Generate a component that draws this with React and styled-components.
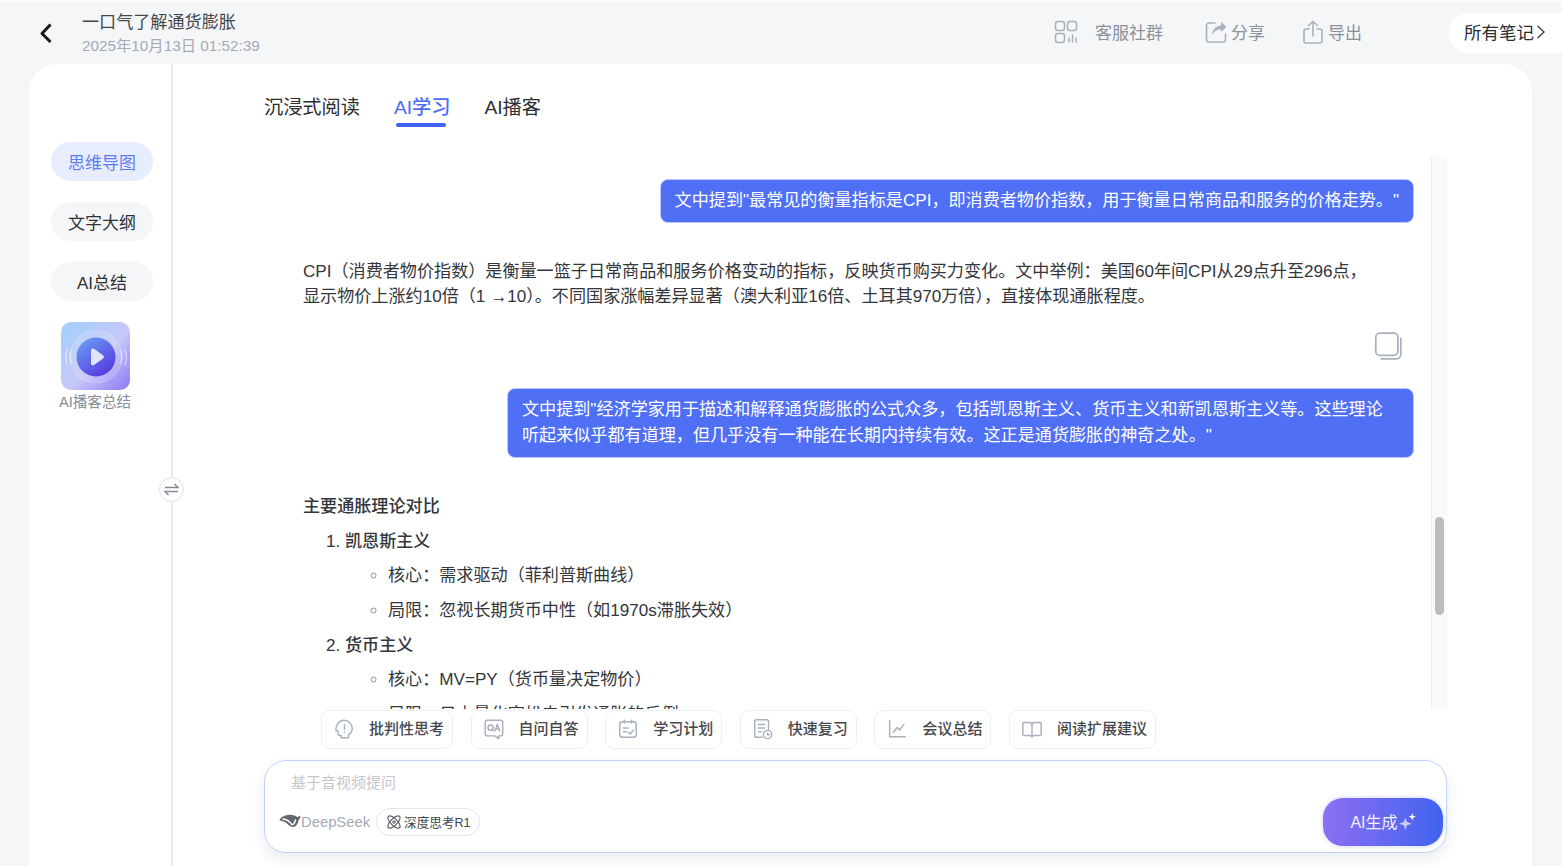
import React from 'react';
import styled, { createGlobalStyle } from 'styled-components';

const GlobalStyle = createGlobalStyle`
  html, body {
    margin: 0;
    padding: 0;
    height: 100%;
    background: #f5f6f8;
    font-family: "Liberation Sans", "Noto Sans CJK SC", sans-serif;
    overflow: hidden;
  }
  * { box-sizing: border-box; }
`;

const Page = styled.div`
  width: 1562px;
  height: 866px;
  display: flex;
  flex-direction: column;
  border-top: 2px solid #fcfcfd;
  overflow: hidden;
`;

const Header = styled.header`
  height: 62px;
  flex: none;
  display: flex;
  align-items: center;
  padding-left: 38px;
`;

const BackButton = styled.div`
  width: 18px;
  height: 24px;
  margin-right: 26px;
  display: flex;
  align-items: center;
`;

const TitleBlock = styled.div`
  display: flex;
  flex-direction: column;
  margin-top: 2px;
`;

const Title = styled.div`
  font-size: 17.1px;
  line-height: 23px;
  color: #42464e;
`;

const DateText = styled.div`
  font-size: 15.3px;
  line-height: 23px;
  color: #a4aab5;
`;

const HeaderActions = styled.div`
  margin-left: auto;
  display: flex;
  align-items: center;
  color: #8c929d;
  font-size: 17px;
`;

const HeaderAction = styled.div`
  display: flex;
  align-items: center;
  gap: ${(p) => p.$gap || 5}px;
  margin-right: ${(p) => p.$after}px;
  padding-bottom: 3px;
`;

const NotesPill = styled.div`
  width: 113px;
  height: 40px;
  padding: 0 0 3px 15px;
  display: flex;
  align-items: center;
  gap: 2px;
  background: #fff;
  border-radius: 20px 0 0 20px;
  color: #2b2d31;
  font-size: 17.5px;
`;

const Card = styled.div`
  flex: 1;
  min-height: 0;
  margin: 0 30px 0 29px;
  background: #fff;
  border-radius: 28px 28px 0 0;
  display: flex;
`;

const Sidebar = styled.aside`
  position: relative;
  width: 144px;
  flex: none;
  border-right: 2px solid #e6e8ef;
  padding: 78px 0 0 22px;
  display: flex;
  flex-direction: column;
  gap: 21px;
`;

const SidePill = styled.div`
  width: 102px;
  height: 39px;
  border-radius: 20px;
  display: flex;
  align-items: center;
  justify-content: center;
  padding-bottom: 1px;
  font-size: 17px;
  background: ${(p) => (p.$active ? '#e8edfd' : '#f5f6f8')};
  color: ${(p) => (p.$active ? '#5f7df1' : '#2f3136')};
`;

const PodcastTile = styled.div`
  width: 90px;
  margin-left: -1px;
  display: flex;
  flex-direction: column;
  align-items: center;
  gap: 1px;
  color: #888d96;
  font-size: 14.6px;
  line-height: 22px;
  white-space: nowrap;
`;

const SwapToggle = styled.div`
  position: absolute;
  right: -13px;
  top: 413px;
  width: 25px;
  height: 25px;
  border-radius: 50%;
  background: #fff;
  border: 1.5px solid #e0e3ea;
  display: flex;
  align-items: center;
  justify-content: center;
`;

const Main = styled.main`
  flex: 1;
  min-width: 0;
  padding: 0 85px 0 91px;
  display: flex;
  flex-direction: column;
`;

const Tabs = styled.nav`
  height: 92px;
  flex: none;
  padding-top: 31px;
  display: flex;
  gap: 34px;
`;

const Tab = styled.div`
  position: relative;
  height: 26px;
  line-height: 26px;
  font-size: 19.2px;
  font-weight: ${(p) => (p.$active ? 500 : 400)};
  color: ${(p) => (p.$active ? '#4a6cf7' : '#2b2d31')};

  ${(p) =>
    p.$active &&
    `&::after {
      content: '';
      position: absolute;
      left: 2px;
      right: 4px;
      bottom: -6px;
      height: 4px;
      border-radius: 2px;
      background: #3f63ee;
    }`}
`;

const ChatArea = styled.div`
  height: 553px;
  flex: none;
  display: flex;
`;

const Messages = styled.div`
  flex: 1;
  min-width: 0;
  overflow: hidden;
  padding: 23px 17px 0 39px;
  display: flex;
  flex-direction: column;
  font-size: 17.1px;
  color: #33363b;
`;

const Bubble = styled.div`
  align-self: flex-end;
  width: ${(p) => (p.$width ? `${p.$width}px` : 'auto')};
  padding: 8px 14px;
  background: #4f6ff5;
  border: 1px solid #b9c7fb;
  border-radius: 8px;
  color: #fff;
  font-size: 17.1px;
  line-height: 26px;
  white-space: nowrap;
  flex: none;
`;

const Answer = styled.div`
  margin-top: 36px;
  line-height: 25px;
  white-space: nowrap;
  flex: none;
`;

const CopyRow = styled.div`
  display: flex;
  justify-content: flex-end;
  padding-right: 12px;
  margin: 23px 0 29px;
  height: 27px;
  flex: none;
`;

const Heading = styled.div`
  margin-top: 36px;
  line-height: 25px;
  font-weight: 500;
  flex: none;
`;

const Ordered = styled.ol`
  margin: 0;
  padding: 0 0 0 42px;
  flex: none;
`;

const OrderedItem = styled.li`
  margin-top: 9.7px;
  line-height: 25px;
  font-weight: 500;
`;

const Circles = styled.ul`
  margin: 0;
  padding: 0 0 0 43px;
  list-style: circle;
  font-weight: 400;
`;

const CircleItem = styled.li`
  margin-top: 9.7px;
  line-height: 25px;
  white-space: nowrap;

  &::marker {
    color: #8b9099;
  }
`;

const ScrollTrack = styled.div`
  width: 16px;
  flex: none;
  background: #fafafa;
  border-left: 1px solid #f0f0f0;
  padding: 361px 3px 0 3px;
`;

const ScrollThumb = styled.div`
  width: 9px;
  height: 98px;
  border-radius: 5px;
  background: #bdbdbd;
`;

const Chips = styled.div`
  flex: none;
  height: 39px;
  margin-top: 1px;
  padding-left: 57px;
  display: flex;
  gap: 17.6px;
`;

const Chip = styled.div`
  height: 39px;
  padding: 0 8px 2px 11px;
  display: flex;
  align-items: center;
  gap: 14px;
  background: #fff;
  border: 1px solid #eff0f3;
  border-radius: 9px;
  font-size: 15px;
  font-weight: 500;
  color: #44474d;
  white-space: nowrap;
  line-height: 18px;
`;

const Composer = styled.div`
  flex: none;
  height: 93px;
  margin-top: 11px;
  border: 1.5px solid #c3d2f8;
  border-radius: 22px;
  background: #fff;
  box-shadow: 0 6px 14px rgba(60, 70, 110, 0.1);
  display: flex;
  flex-direction: column;
  padding: 10px 3px 0 14px;
`;

const Placeholder = styled.div`
  padding-left: 12px;
  font-size: 15px;
  line-height: 24px;
  color: #c6c7ca;
`;

const ComposerRow = styled.div`
  display: flex;
  align-items: center;
  margin-top: 3px;
`;

const ModelName = styled.div`
  display: flex;
  align-items: center;
  gap: 0;
  font-size: 14.8px;
  color: #a4aab5;
  margin-right: 6px;
`;

const ThinkChip = styled.div`
  height: 28px;
  padding: 0 8px 1px 9px;
  display: flex;
  align-items: center;
  gap: 2px;
  border: 1.5px solid #e4e6ec;
  border-radius: 14px;
  font-size: 12.6px;
  color: #44474d;
  white-space: nowrap;
`;

const GenerateButton = styled.div`
  margin-left: auto;
  width: 120px;
  height: 48px;
  padding-bottom: 2px;
  border-radius: 20px;
  background: linear-gradient(90deg, #8d6ff2, #4063ee);
  box-shadow: 0 0 4px rgba(90, 100, 230, 0.35);
  color: #f1f0ff;
  font-size: 16px;
  display: flex;
  align-items: center;
  justify-content: center;
  gap: 1px;
`;

const Gray = ({ size = 24, children, w = 1.6, box = 24 }) => (
  <svg
    width={size}
    height={size}
    viewBox={`0 0 ${box} ${box}`}
    fill="none"
    stroke="#a9b1be"
    strokeWidth={w}
    strokeLinecap="round"
    strokeLinejoin="round"
  >
    {children}
  </svg>
);

const chips = [
  {
    label: '批判性思考',
    icon: (
      <Gray size={22}>
        <path d="M12 2.500a9 9 0 0 1 9 9c0 3-1.500 5-4 6.500v3.500H9V19H7.500a2 2 0 0 1-2-2v-2.500L3 13.500c.2-6 3.800-11 9-11z" />
        <path d="M12.500 7v5.500M12.500 15.500v.4" />
      </Gray>
    ),
  },
  {
    label: '自问自答',
    icon: (
      <Gray size={22}>
        <path d="M4.500 2.500h15a2 2 0 0 1 2 2v13a2 2 0 0 1-2 2H17v3l-4-3H4.500a2 2 0 0 1-2-2v-13a2 2 0 0 1 2-2z" />
        <circle cx="8.300" cy="10.500" r="2.800" />
        <path d="M10 13l1 1M13 14l2.600-7 2.600 7M14 12h3.400" />
      </Gray>
    ),
  },
  {
    label: '学习计划',
    icon: (
      <Gray size={22}>
        <rect x="3" y="4" width="18" height="17" rx="3" />
        <path d="M8 2.500v3M16 2.500v3M7 11h5M7 15h3M12 15.500l2.500 2 3.500-4.500" />
      </Gray>
    ),
  },
  {
    label: '快速复习',
    icon: (
      <Gray size={22}>
        <path d="M11 21H5a2 2 0 0 1-2-2V4a2 2 0 0 1 2-2h11a2 2 0 0 1 2 2v8" />
        <path d="M7 7h7M7 11h7M7 15h3" />
        <circle cx="17" cy="18" r="4.500" />
        <path d="M17 16v2.200h2" />
      </Gray>
    ),
  },
  {
    label: '会议总结',
    icon: (
      <Gray size={22}>
        <path d="M4 3v17.500h17" />
        <path d="M8 15.500l4-5 3 2.500 4.500-6" />
      </Gray>
    ),
  },
  {
    label: '阅读扩展建议',
    icon: (
      <Gray size={22}>
        <path d="M6 5H3a1 1 0 0 0-1 1v12a1 1 0 0 0 1 1h7l2 1.500 2-1.500h7a1 1 0 0 0 1-1V6a1 1 0 0 0-1-1h-3" />
        <path d="M6 5h3a3 3 0 0 1 3 3v11M18 5h-3a3 3 0 0 0-3 3" />
      </Gray>
    ),
  },
];

function PodcastIcon() {
  return (
    <svg width="69" height="68" viewBox="0 0 69 68">
      <defs>
        <linearGradient id="tile" x1="0" y1="0" x2="1" y2="1">
          <stop offset="0" stopColor="#9fd0fb" />
          <stop offset="0.55" stopColor="#c8c8f8" />
          <stop offset="1" stopColor="#8b78f6" />
        </linearGradient>
        <linearGradient id="disc" x1="0.1" y1="0" x2="0.8" y2="1">
          <stop offset="0" stopColor="#6aa0f6" />
          <stop offset="1" stopColor="#5536de" />
        </linearGradient>
      </defs>
      <rect width="69" height="68" rx="10" fill="url(#tile)" />
      <circle cx="35" cy="35" r="26" fill="#fff" fillOpacity="0.12" stroke="#fff" strokeOpacity="0.25" />
      <circle cx="35" cy="35" r="19.500" fill="url(#disc)" />
      <path
        d="M30 28.500c0-1.600 1.700-2.500 3-1.700l9 6.500c1.100.8 1.100 2.500 0 3.300l-9 6.500c-1.300.8-3-.1-3-1.700z"
        fill="#e4e4fc"
      />
      <path d="M6 27c-1.500 5-1.500 11 0 16M10 29c-1 3.500-1 8.500 0 12M64 27c1.500 5 1.500 11 0 16M60 29c1 3.500 1 8.500 0 12" fill="none" stroke="#fff" strokeOpacity="0.55" strokeWidth="1.200" strokeLinecap="round" />
    </svg>
  );
}

function WhaleIcon() {
  return (
    <svg width="22" height="16" viewBox="0 0 22 16">
      <path
        d="M21.500 1.500c-1 .6-2 .8-3 1.800C16.500 1.500 13 .5 9 1 4 1.700 1 4 .5 6.500c2.500 0 5.500 1.200 8 3.500 1.800 1.800 3.500 3 5.500 3 3 0 5-3 5.300-6.200.9-.9 2-3 2.200-5.300z"
        fill="#63666e"
      />
      <path d="M4 5c3 .3 6.500 2 9 5.800 1.700-.5 3-2.500 3.500-4.800" fill="none" stroke="#fff" strokeWidth="1.400" strokeLinecap="round" />
    </svg>
  );
}

export default function App() {
  return (
    <>
      <GlobalStyle />
      <Page>
        <Header>
          <BackButton>
            <svg width="16" height="24" viewBox="0 0 16 24" fill="none">
              <path d="M12.500 3.500L4 12.500l8.500 8.500" stroke="#15171a" strokeWidth="3" strokeLinejoin="round" />
            </svg>
          </BackButton>
          <TitleBlock>
            <Title>一口气了解通货膨胀</Title>
            <DateText>2025年10月13日 01:52:39</DateText>
          </TitleBlock>
          <HeaderActions>
            <HeaderAction $after={41} $gap={17}>
              <Gray size={24} w={1.5}>
                <rect x="1.500" y="1.500" width="9" height="9" rx="2.500" />
                <rect x="13.500" y="1.500" width="9" height="9" rx="2.500" />
                <rect x="1.500" y="13.500" width="9" height="9" rx="2.500" />
                <path d="M15 18v4M18.500 15v7M22 18v4" />
              </Gray>
              客服社群
            </HeaderAction>
            <HeaderAction $after={36} $gap={3}>
              <Gray size={24}>
                <path d="M11 3H5a2.500 2.500 0 0 0-2.500 2.500v14A2.500 2.500 0 0 0 5 22h14a2.500 2.500 0 0 0 2.500-2.500V14" />
                <path d="M17 2l5.500 5-5.500 5V9.500c-4 0-7 1.500-9 5.500 .5-5.500 3.500-9 9-9.500z" fill="#a9b1be" stroke="none" />
              </Gray>
              分享
            </HeaderAction>
            <HeaderAction $after={87} $gap={3}>
              <Gray size={24}>
                <path d="M8 9H5a2 2 0 0 0-2 2v10a2 2 0 0 0 2 2h14a2 2 0 0 0 2-2V11a2 2 0 0 0-2-2h-3" />
                <path d="M12 16V1.500M7.500 5.500L12 1.500l4.500 4" />
              </Gray>
              导出
            </HeaderAction>
            <NotesPill>
              所有笔记
              <svg width="10" height="16" viewBox="0 0 10 16" fill="none">
                <path d="M1.500 2l6.500 6-6.500 6" stroke="#3a3d42" strokeWidth="1.300" />
              </svg>
            </NotesPill>
          </HeaderActions>
        </Header>
        <Card>
          <Sidebar>
            <SidePill $active>思维导图</SidePill>
            <SidePill>文字大纲</SidePill>
            <SidePill>AI总结</SidePill>
            <PodcastTile>
              <PodcastIcon />
              AI播客总结
            </PodcastTile>
            <SwapToggle>
              <svg width="15" height="13" viewBox="0 0 15 13" fill="none" stroke="#858b96" strokeWidth="1.500">
                <path d="M1 4.500h13L10.500 1M14 8.500H1l3.500 3.500" />
              </svg>
            </SwapToggle>
          </Sidebar>
          <Main>
            <Tabs>
              <Tab>沉浸式阅读</Tab>
              <Tab $active>AI学习</Tab>
              <Tab>AI播客</Tab>
            </Tabs>
            <ChatArea>
              <Messages>
                <Bubble>文中提到"最常见的衡量指标是CPI，即消费者物价指数，用于衡量日常商品和服务的价格走势。"</Bubble>
                <Answer>
                  CPI（消费者物价指数）是衡量一篮子日常商品和服务价格变动的指标，反映货币购买力变化。文中举例：美国60年间CPI从29点升至296点，
                  <br />
                  显示物价上涨约10倍（1 →10）。不同国家涨幅差异显著（澳大利亚16倍、土耳其970万倍），直接体现通胀程度。
                </Answer>
                <CopyRow>
                  <Gray size={28} w={1.5}>
                    <rect x="1.500" y="1" width="19" height="19" rx="3.500" />
                    <path d="M23 5.500V19a4 4 0 0 1-4 4H6" />
                  </Gray>
                </CopyRow>
                <Bubble $width={907}>
                  文中提到"经济学家用于描述和解释通货膨胀的公式众多，包括凯恩斯主义、货币主义和新凯恩斯主义等。这些理论
                  <br />
                  听起来似乎都有道理，但几乎没有一种能在长期内持续有效。这正是通货膨胀的神奇之处。"
                </Bubble>
                <Heading>主要通胀理论对比</Heading>
                <Ordered>
                  <OrderedItem>
                    凯恩斯主义
                    <Circles>
                      <CircleItem>核心：需求驱动（菲利普斯曲线）</CircleItem>
                      <CircleItem>局限：忽视长期货币中性（如1970s滞胀失效）</CircleItem>
                    </Circles>
                  </OrderedItem>
                  <OrderedItem>
                    货币主义
                    <Circles>
                      <CircleItem>核心：MV=PY（货币量决定物价）</CircleItem>
                      <CircleItem>局限：日本量化宽松未引发通胀的反例</CircleItem>
                    </Circles>
                  </OrderedItem>
                </Ordered>
              </Messages>
              <ScrollTrack>
                <ScrollThumb />
              </ScrollTrack>
            </ChatArea>
            <Chips>
              {chips.map((c) => (
                <Chip key={c.label}>
                  {c.icon}
                  {c.label}
                </Chip>
              ))}
            </Chips>
            <Composer>
              <Placeholder>基于音视频提问</Placeholder>
              <ComposerRow>
                <ModelName>
                  <WhaleIcon />
                  DeepSeek
                </ModelName>
                <ThinkChip>
                  <svg width="16" height="16" viewBox="0 0 16 16" fill="none" stroke="#55585f" strokeWidth="1.100">
                    <ellipse cx="8" cy="8" rx="8" ry="3.300" transform="rotate(45 8 8)" />
                    <ellipse cx="8" cy="8" rx="8" ry="3.300" transform="rotate(-45 8 8)" />
                    <circle cx="8" cy="8" r="1.200" />
                  </svg>
                  深度思考R1
                </ThinkChip>
                <GenerateButton>
                  AI生成
                  <svg width="17" height="17" viewBox="0 0 16 16" fill="#cfc9fb">
                    <path d="M6 4l1.500 4.500L12 10l-4.500 1.500L6 16l-1.500-4.500L0 10l4.500-1.500z" />
                    <path d="M12.500 0l.9 2.600 2.600.9-2.600.9-.9 2.600-.9-2.600L9 3.500l2.600-.9z" fill="#fff" />
                  </svg>
                </GenerateButton>
              </ComposerRow>
            </Composer>
          </Main>
        </Card>
      </Page>
    </>
  );
}
